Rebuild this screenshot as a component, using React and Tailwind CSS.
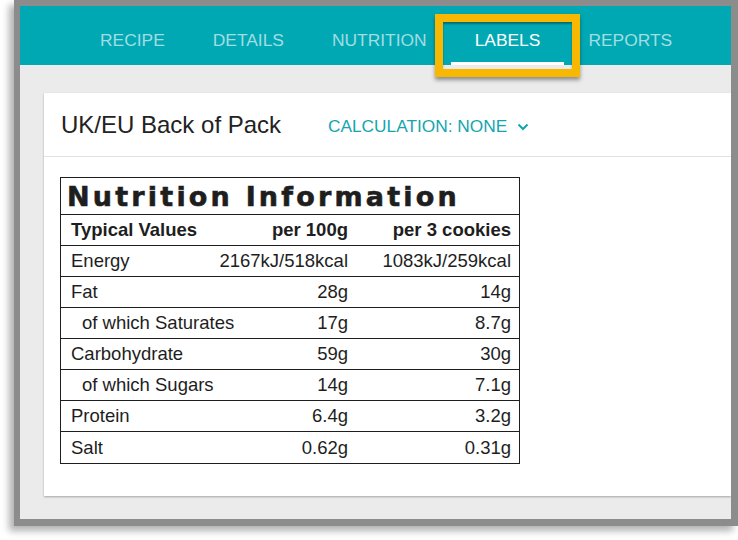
import React from 'react';

const tabs = ['RECIPE', 'DETAILS', 'NUTRITION', 'LABELS', 'REPORTS'];

const rows = [
  { name: 'Energy', per100: '2167kJ/518kcal', perServing: '1083kJ/259kcal' },
  { name: 'Fat', per100: '28g', perServing: '14g' },
  { name: 'of which Saturates', per100: '17g', perServing: '8.7g', sub: true },
  { name: 'Carbohydrate', per100: '59g', perServing: '30g' },
  { name: 'of which Sugars', per100: '14g', perServing: '7.1g', sub: true },
  { name: 'Protein', per100: '6.4g', perServing: '3.2g' },
  { name: 'Salt', per100: '0.62g', perServing: '0.31g' },
];

function NutritionTable() {
  return (
    <div className="w-[460px] border border-[#1e1e1e] text-[#1e1e1e] text-[18.5px] whitespace-nowrap">
      {/* Title */}
      <div className="h-[37px] border-b border-[#1e1e1e] flex items-center pl-[6px]">
        <span className="font-['DejaVu_Sans',sans-serif] font-bold text-[27px] tracking-[3.2px] leading-none [-webkit-text-stroke:0.6px_#1e1e1e]">
          Nutrition Information
        </span>
      </div>

      {/* Column headers */}
      <div className="h-[31px] border-b border-[#1e1e1e] grid grid-cols-[minmax(0,1fr)_140px_163px] items-center font-bold">
        <span className="pl-[10px]">Typical Values</span>
        <span className="text-right pr-[8px]">per 100g</span>
        <span className="text-right pr-[8px]">per 3 cookies</span>
      </div>

      {rows.map((row, i) => (
        <div
          key={row.name}
          className={`h-[31px] grid grid-cols-[minmax(0,1fr)_140px_163px] items-center ${i < rows.length - 1 ? 'border-b border-[#1e1e1e]' : ''}`}
        >
          <span className={row.sub ? 'pl-[21px]' : 'pl-[10px]'}>{row.name}</span>
          <span className="text-right pr-[8px]">{row.per100}</span>
          <span className="text-right pr-[8px]">{row.perServing}</span>
        </div>
      ))}
    </div>
  );
}

export default function App() {
  return (
    <div className="min-h-screen bg-white font-['Liberation_Sans',Arial,sans-serif]">
      <div className="relative ml-[14px] w-[724px] h-[526px] border-[6px] border-r-[7px] border-b-[7px] border-[#8c8c8c] bg-[#ebebeb] flex flex-col overflow-hidden shadow-[-5px_5px_7px_rgba(0,0,0,0.3)]">
        {/* Tab bar */}
        <div className="h-[59px] shrink-0 bg-[#00a8b4] flex pl-[56px]">
          {tabs.map((tab) => (
            <div
              key={tab}
              className={`relative h-full px-6 flex items-center pt-[10px] text-[17.4px] ${tab === 'LABELS' ? 'text-white' : 'text-[#a3dde2]'}`}
            >
              {tab}
              {tab === 'LABELS' && <div className="absolute left-0 right-0 bottom-0 h-[3px] bg-white" />}
            </div>
          ))}
        </div>

        {/* Highlight box around active tab */}
        <div className="absolute left-[415px] top-[8px] w-[145px] h-[63px] border-[8px] border-[#f8b700] shadow-[0_3px_4px_rgba(0,0,0,0.4),inset_0_2px_2px_rgba(0,0,0,0.35)]" />

        {/* Content */}
        <div className="flex-1 pt-[28px] pl-[24px]">
          <div className="h-[403px] bg-white shadow-[0_1px_2px_rgba(0,0,0,0.3)]">
            <div className="h-[64px] border-b border-[#e2e2e2] flex items-center pl-[17px]">
              <span className="w-[267px] text-[24px] text-[#222]">UK/EU Back of Pack</span>
              <span className="flex items-center gap-[10px] text-[17.3px] text-[#14a5b0] pt-[4px]">
                CALCULATION: NONE
                <svg width="12" height="8" viewBox="0 0 12 8" fill="none">
                  <polyline points="1.5,1.5 6,6 10.5,1.5" stroke="#14a5b0" strokeWidth="2" />
                </svg>
              </span>
            </div>
            <div className="pt-[20px] pl-[16px]">
              <NutritionTable />
            </div>
          </div>
        </div>
      </div>
    </div>
  );
}
